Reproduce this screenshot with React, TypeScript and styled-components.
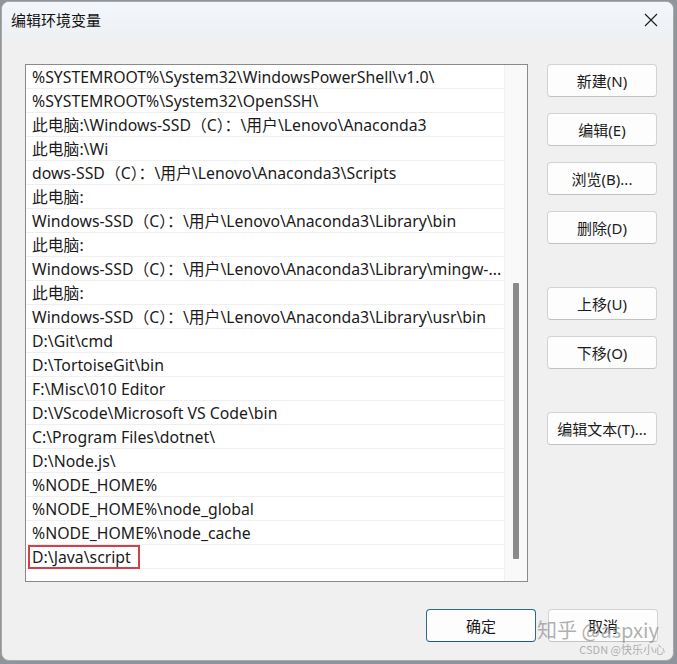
import React from "react";
import styled, { createGlobalStyle } from "styled-components";

const GlobalStyle = createGlobalStyle`
  html, body {
    margin: 0;
    padding: 0;
    background: #8f959c;
  }
  body {
    font-family: "Noto Sans", "Noto Sans CJK SC", sans-serif;
  }
`;

const Page = styled.div`
  width: 677px;
  height: 664px;
  padding: 1px 0 0 1px;
  box-sizing: border-box;
`;

const Window = styled.div`
  position: relative;
  width: 673px;
  height: 660px;
  box-sizing: border-box;
  border: 1px solid #a9a9a9;
  border-radius: 8px;
  background: #f0f0f0;
  display: flex;
  flex-direction: column;
  overflow: hidden;
  font-family: "Noto Sans", "Noto Sans CJK SC", sans-serif;
  color: #1a1a1a;
`;

const TitleBar = styled.div`
  height: 35px;
  display: flex;
  align-items: center;
  justify-content: space-between;
  padding: 0 10px 0 9px;
  background: linear-gradient(#f3f6fa, #eef1f4);
`;

const Title = styled.span`
  font-size: 15px;
  font-family: "Noto Sans CJK SC", sans-serif;
  color: #111;
`;

const CloseButton = styled.div`
  width: 24px;
  height: 24px;
  display: flex;
  align-items: center;
  justify-content: center;
`;

const Body = styled.div`
  display: flex;
  padding: 27px 0 0 23px;
`;

const ListBox = styled.div`
  width: 503px;
  height: 518px;
  box-sizing: border-box;
  border: 1px solid #8a8a8a;
  background: #ffffff;
  display: flex;
  overflow: hidden;
`;

const Rows = styled.div`
  width: 478px;
  display: flex;
  flex-direction: column;
`;

const Row = styled.div`
  height: 24px;
  flex: none;
  box-sizing: border-box;
  border-bottom: 1px solid #efefef;
  padding: 1px 0 0 6px;
  font-size: 15.8px;
  line-height: 22px;
  white-space: nowrap;
`;

const Highlight = styled.span`
  position: relative;
  &::after {
    content: "";
    position: absolute;
    left: -4px;
    right: -9px;
    top: -1px;
    bottom: -1px;
    border: 2px solid #d2404a;
  }
`;

const ScrollTrack = styled.div`
  flex: 1;
  background: #f9f9f9;
  border-left: 1px solid #f1f1f1;
  display: flex;
  justify-content: center;
`;

const Thumb = styled.div<{ $top: number; $height: number }>`
  width: 6px;
  margin-top: ${(p) => p.$top}px;
  height: ${(p) => p.$height}px;
  background: #8a8a8a;
  border-radius: 1px;
`;

const ButtonColumn = styled.div`
  display: flex;
  flex-direction: column;
  gap: 16px;
  margin-left: 19px;
`;

const Button = styled.div<{ $extra?: number; $primary?: boolean }>`
  width: 110px;
  height: 33px;
  box-sizing: border-box;
  margin-top: ${(p) => p.$extra || 0}px;
  border: 1px solid ${(p) => (p.$primary ? "#2f6a8c" : "#d3d3d3")};
  border-bottom-color: ${(p) => (p.$primary ? "#21597a" : "#c2c2c2")};
  border-radius: 4px;
  background: #fdfdfd;
  display: flex;
  align-items: center;
  justify-content: center;
  font-size: 15px;
  color: #1b1b1b;
`;

const Footer = styled.div`
  display: flex;
  justify-content: flex-end;
  gap: 12px;
  padding: 27px 15px 0 0;
`;

const Watermark = styled.div`
  position: absolute;
  right: 8px;
  bottom: 4px;
  display: flex;
  flex-direction: column;
  align-items: flex-end;
  pointer-events: none;
  color: rgba(150, 150, 150, 0.75);
`;

const MarkBig = styled.span`
  font-size: 20px;
  line-height: 24px;
  margin-right: 6px;
  font-family: "Noto Sans CJK SC", sans-serif;
`;

const MarkSmall = styled.span`
  font-size: 11px;
  line-height: 14px;
  font-family: "Noto Sans CJK SC", sans-serif;
`;

const entries = [
  "%SYSTEMROOT%\\System32\\WindowsPowerShell\\v1.0\\",
  "%SYSTEMROOT%\\System32\\OpenSSH\\",
  "此电脑:\\Windows-SSD（C）：\\用户\\Lenovo\\Anaconda3",
  "此电脑:\\Wi",
  "dows-SSD（C）：\\用户\\Lenovo\\Anaconda3\\Scripts",
  "此电脑:",
  "Windows-SSD（C）：\\用户\\Lenovo\\Anaconda3\\Library\\bin",
  "此电脑:",
  "Windows-SSD（C）：\\用户\\Lenovo\\Anaconda3\\Library\\mingw-...",
  "此电脑:",
  "Windows-SSD（C）：\\用户\\Lenovo\\Anaconda3\\Library\\usr\\bin",
  "D:\\Git\\cmd",
  "D:\\TortoiseGit\\bin",
  "F:\\Misc\\010 Editor",
  "D:\\VScode\\Microsoft VS Code\\bin",
  "C:\\Program Files\\dotnet\\",
  "D:\\Node.js\\",
  "%NODE_HOME%",
  "%NODE_HOME%\\node_global",
  "%NODE_HOME%\\node_cache",
];

const App = () => {
  return (
    <Page>
      <GlobalStyle />
      <Window>
        <TitleBar>
          <Title>编辑环境变量</Title>
          <CloseButton>
            <svg width="14" height="14" viewBox="0 0 14 14">
              <path d="M1 1 L13 13 M13 1 L1 13" stroke="#1a1a1a" strokeWidth="1.1" />
            </svg>
          </CloseButton>
        </TitleBar>
        <Body>
          <ListBox>
            <Rows>
              {entries.map((e, i) => (
                <Row key={i}>{e}</Row>
              ))}
              <Row>
                <Highlight>D:\Java\script</Highlight>
              </Row>
            </Rows>
            <ScrollTrack>
              <Thumb $top={218} $height={276} />
            </ScrollTrack>
          </ListBox>
          <ButtonColumn>
            <Button>新建(N)</Button>
            <Button>编辑(E)</Button>
            <Button>浏览(B)...</Button>
            <Button>删除(D)</Button>
            <Button $extra={27}>上移(U)</Button>
            <Button>下移(O)</Button>
            <Button $extra={27}>编辑文本(T)...</Button>
          </ButtonColumn>
        </Body>
        <Footer>
          <Button $primary>确定</Button>
          <Button>取消</Button>
        </Footer>
        <Watermark>
          <MarkBig>知乎 @aspxiy</MarkBig>
          <MarkSmall>CSDN @快乐小心</MarkSmall>
        </Watermark>
      </Window>
    </Page>
  );
};

export default App;
